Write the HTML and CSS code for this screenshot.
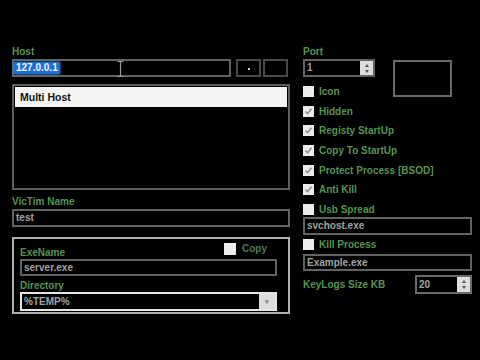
FILE: index.html
```html
<!DOCTYPE html>
<html>
<head>
<meta charset="utf-8">
<link rel="stylesheet" href="styles.css">
</head>
<body>
<div class="app">
  <div class="left">
    <div class="label">Host</div>
    <div class="host-row">
      <div class="input host-input"><span class="sel">127.0.0.1</span>
        <svg class="ibeam" width="7" height="16" viewBox="0 0 7 16"><path d="M0.5 0.5h6M3.5 0.5v15M0.5 15.5h6" stroke="#9a9a9a" stroke-width="1.2" fill="none"/></svg>
      </div>
      <div class="small-box"><span class="dot"></span></div>
      <div class="small-box"></div>
    </div>
    <div class="listbox">
      <div class="list-head">Multi Host</div>
    </div>
    <div class="label mt6">VicTim Name</div>
    <div class="input full">test</div>
    <div class="group">
      <div class="group-top">
        <div class="label lbl-exe">ExeName</div>
        <div class="copy"><span class="cb"></span><span class="label">Copy</span></div>
      </div>
      <div class="input exe">server.exe</div>
      <div class="label mt4">Directory</div>
      <div class="combo"><span class="combo-text">%TEMP%</span><span class="combo-btn">&#9662;</span></div>
    </div>
  </div>
  <div class="right">
    <div class="top">
      <div class="port-col">
        <div class="label">Port</div>
        <div class="input port"><span class="val">1</span><span class="spin"><i class="up"></i><i class="down"></i></span></div>
        <div class="check-row first"><span class="cb"></span><span class="label">Icon</span></div>
      </div>
      <div class="icon-box"></div>
    </div>
    <div class="check-row"><span class="cb on"><svg width="9" height="9" viewBox="0 0 9 9"><path d="M1.5 4.5l2 2.2 4-5" stroke="#8a8a8a" stroke-width="1.4" fill="none"/></svg></span><span class="label">Hidden</span></div>
    <div class="check-row"><span class="cb on"><svg width="9" height="9" viewBox="0 0 9 9"><path d="M1.5 4.5l2 2.2 4-5" stroke="#8a8a8a" stroke-width="1.4" fill="none"/></svg></span><span class="label">Registy StartUp</span></div>
    <div class="check-row"><span class="cb on"><svg width="9" height="9" viewBox="0 0 9 9"><path d="M1.5 4.5l2 2.2 4-5" stroke="#8a8a8a" stroke-width="1.4" fill="none"/></svg></span><span class="label">Copy To StartUp</span></div>
    <div class="check-row"><span class="cb on"><svg width="9" height="9" viewBox="0 0 9 9"><path d="M1.5 4.5l2 2.2 4-5" stroke="#8a8a8a" stroke-width="1.4" fill="none"/></svg></span><span class="label">Protect Process [BSOD]</span></div>
    <div class="check-row"><span class="cb on"><svg width="9" height="9" viewBox="0 0 9 9"><path d="M1.5 4.5l2 2.2 4-5" stroke="#8a8a8a" stroke-width="1.4" fill="none"/></svg></span><span class="label">Anti Kill</span></div>
    <div class="check-row"><span class="cb"></span><span class="label">Usb Spread</span></div>
    <div class="input rfull svc">svchost.exe</div>
    <div class="check-row kill"><span class="cb"></span><span class="label">Kill Process</span></div>
    <div class="input rfull ex">Example.exe</div>
    <div class="keylog">
      <span class="label">KeyLogs Size KB</span>
      <div class="input kl"><span class="val">20</span><span class="spin"><i class="up"></i><i class="down"></i></span></div>
    </div>
  </div>
</div>
</body>
</html>
```

FILE: styles.css
```css
* { box-sizing: border-box; }
html, body { margin: 0; background: #000; }
body {
  width: 480px; height: 360px; overflow: hidden;
  font-family: "Liberation Sans", Arial, sans-serif;
  font-weight: bold; font-size: 10px; color: #a2a2a2;
}
.app { display: flex; gap: 13px; padding: 46px 0 0 12px; }
.left { width: 278px; }
.right { width: 169px; }
.label { color: #569350; height: 11px; line-height: 11px; font-size: 10px; white-space: nowrap; }
.mt6 { margin-top: 6px; }
.mt4 { margin-top: 4px; }
.input {
  height: 18px; border: 2px solid #626262; background: #000;
  line-height: 14px; padding-left: 2px; color: #a2a2a2; white-space: nowrap;
}
.host-row { display: flex; margin-top: 2px; height: 18px; }
.host-input { width: 220px; margin-right: 5px; position: relative; padding-left: 0; }
.sel { display: inline-block; background: #1f6fd6; color: #eef4ff; padding: 0 2px; line-height: 12px; margin-top: 1px; box-shadow: 0 0 3px #3a8ff0; }
.ibeam { position: absolute; left: 103px; top: 0px; }
.small-box { width: 25px; height: 18px; border: 2px solid #4a4a4a; margin-right: 2px; display: flex; align-items: center; justify-content: center; }
.dot { width: 2px; height: 2px; background: #ccc; margin-top: 2px; }
.listbox { margin-top: 7px; height: 106px; border: 2px solid #5e5e5e; padding: 1px; }
.list-head { background: #f4f4f4; height: 20px; line-height: 20px; color: #111; padding-left: 5px; font-size: 10.5px; }
.full { margin-top: 2px; }
.group { margin-top: 10px; border: 2px solid #b0b0b0; padding: 4px 11px 1px 6px; height: 77px; }
.group-top { display: flex; justify-content: space-between; height: 16px; }
.lbl-exe { margin-top: 4px; }
.copy { display: flex; align-items: center; gap: 6px; margin-right: 10px; height: 12px; }
.copy .label { height: 12px; line-height: 12px; color: #4f7a4a; }
.cb { width: 12px; height: 12px; background: #ececec; display: inline-flex; align-items: center; justify-content: center; flex: none; }
.exe { height: 17px; line-height: 13px; }
.combo { margin-top: 1px; height: 19px; border: 2px solid #e6e6e6; display: flex; justify-content: space-between; }
.combo-text { padding-left: 2px; line-height: 15px; color: #a2a2a2; }
.combo-btn { width: 16px; background: #dcdcdc; color: #888; font-size: 7px; line-height: 15px; text-align: center; }
.top { display: flex; }
.port-col { width: 72px; }
.port { margin-top: 2px; display: flex; justify-content: space-between; padding-right: 0; }
.spin { width: 13px; background: #dedede; display: flex; flex-direction: column; align-items: center; justify-content: space-around; padding: 1px 0; }
.spin i { display: block; width: 0; height: 0; border-left: 2px solid transparent; border-right: 2px solid transparent; }
.spin .up { border-bottom: 3px solid #555; }
.spin .down { border-top: 3px solid #555; }
.icon-box { margin: 14px 0 0 18px; width: 59px; height: 37px; border: 2px solid #6a6a6a; }
.check-row { display: flex; align-items: center; gap: 5px; height: 19.6px; }
.check-row .cb { width: 11px; height: 11px; }
.check-row.first { margin-top: 5px; }
.svc { margin-top: -2px; }
.check-row.kill { height: 19px; }
.ex { height: 17px; line-height: 13px; }
.keylog { display: flex; justify-content: space-between; align-items: center; margin-top: 4px; height: 19px; }
.kl { width: 57px; height: 19px; display: flex; justify-content: space-between; padding-right: 0; border-color: #6a6a6a; }
.kl .val { line-height: 15px; }
```
